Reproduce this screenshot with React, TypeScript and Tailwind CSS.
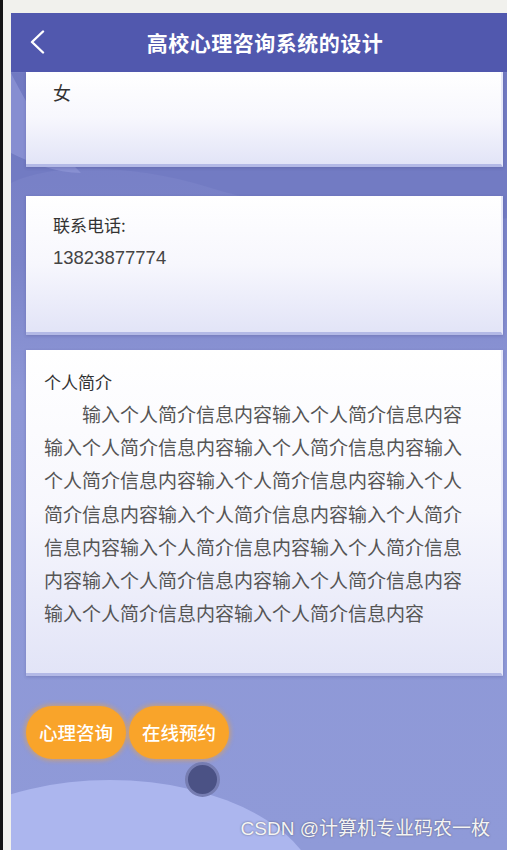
const intro = '输入个人简介信息内容'.repeat(15)

const cardBase =
  'bg-gradient-to-b from-white via-[#f7f7fd] to-[#e2e4f7] border-b-[3px] border-r-2 border-b-[#b3b9e6] border-r-[#e6e8fa] shadow-[0_1px_3px_rgba(60,60,120,0.25)]'

const pill =
  'h-[53px] rounded-full bg-[#f9a42a] px-[13px] text-[18.5px] font-medium text-white shadow-[0_0_4px_2px_rgba(249,164,42,0.45)]'

function Backdrop() {
  return (
    <svg className="absolute inset-0 h-full w-full" viewBox="0 0 496 837" preserveAspectRatio="none">
      <defs>
        <linearGradient id="bg" x1="0" y1="0" x2="0" y2="1">
          <stop offset="0" stopColor="#737bc3" />
          <stop offset="0.3" stopColor="#7b84c9" />
          <stop offset="0.45" stopColor="#8e97d6" />
          <stop offset="1" stopColor="#8f9ad8" />
        </linearGradient>
      </defs>
      <rect width="496" height="837" fill="url(#bg)" />
      {/* soft swoosh behind the first cards */}
      <path d="M0 60 L0 170 C40 150 120 150 200 175 C300 205 420 215 496 205 L496 60 Z" fill="#6e77bf" opacity="0.55" />
      <path d="M0 60 L0 140 C20 150 45 160 70 160 C40 130 20 100 0 60 Z" fill="#8c94d5" opacity="0.8" />
      {/* hill at the bottom */}
      <ellipse cx="99" cy="887" rx="210" ry="120" fill="#acb6ee" />
    </svg>
  )
}

export default function App() {
  return (
    <div className="h-[850px] w-[507px] overflow-hidden border-l-[3px] border-[#141414] bg-[#f1f1ed] pl-[8px] pt-[13px] font-['Noto_Sans_CJK_SC',sans-serif]">
      <div className="relative h-[837px] w-[496px] overflow-hidden">
        <Backdrop />

        <div className="relative flex h-full flex-col">
          {/* top bar */}
          <div className="relative flex h-[59px] shrink-0 items-center justify-center bg-[#5158ae]">
            <svg className="absolute left-[18px] top-[17px] h-[24px] w-[16px]" viewBox="0 0 16 24" fill="none">
              <polyline points="14,1.5 3,12 14,22.5" stroke="white" strokeWidth="2.4" strokeLinecap="round" strokeLinejoin="round" />
            </svg>
            <h1 className="ml-[12px] text-[21px] font-bold tracking-[0.5px] text-white">高校心理咨询系统的设计</h1>
          </div>

          <div className="flex flex-col pl-[15px] pr-[4px]">
            <div className={`${cardBase} h-[95px] pl-[27px] pt-[6px] text-[18px] leading-[28px] text-[#333]`}>女</div>

            <div className={`${cardBase} mt-[29px] h-[139px] pl-[27px] pt-[12px] leading-[33px] text-[#333]`}>
              <p className="text-[17px]">联系电话:</p>
              <p className="font-['Liberation_Sans',sans-serif] text-[18.5px] text-[#444]">13823877774</p>
            </div>

            <div className={`${cardBase} mt-[15px] h-[326px] pl-[18px] pt-[17px] text-[#444]`}>
              <p className="text-[17px] leading-[30px] text-[#333]">个人简介</p>
              <p className="w-[420px] indent-[2em] text-[19px] leading-[33.2px] text-[#555]">{intro}</p>
            </div>
          </div>

          <div className="mt-[30px] flex gap-[3px] pl-[15px]">
            <button className={pill}>心理咨询</button>
            <button className={pill}>在线预约</button>
          </div>

          <div className="ml-[174px] mt-[3px] h-[35px] w-[35px] rounded-full border-[3px] border-[#767db2] bg-[#4b5285]" />
        </div>

        <p className="absolute bottom-[7px] right-[17px] font-['Liberation_Sans','Noto_Sans_CJK_SC',sans-serif] text-[19px] text-[#f4f4f4] [text-shadow:0_0_2px_rgba(70,70,90,0.8)]">
          CSDN @计算机专业码农一枚
        </p>
      </div>
    </div>
  )
}
